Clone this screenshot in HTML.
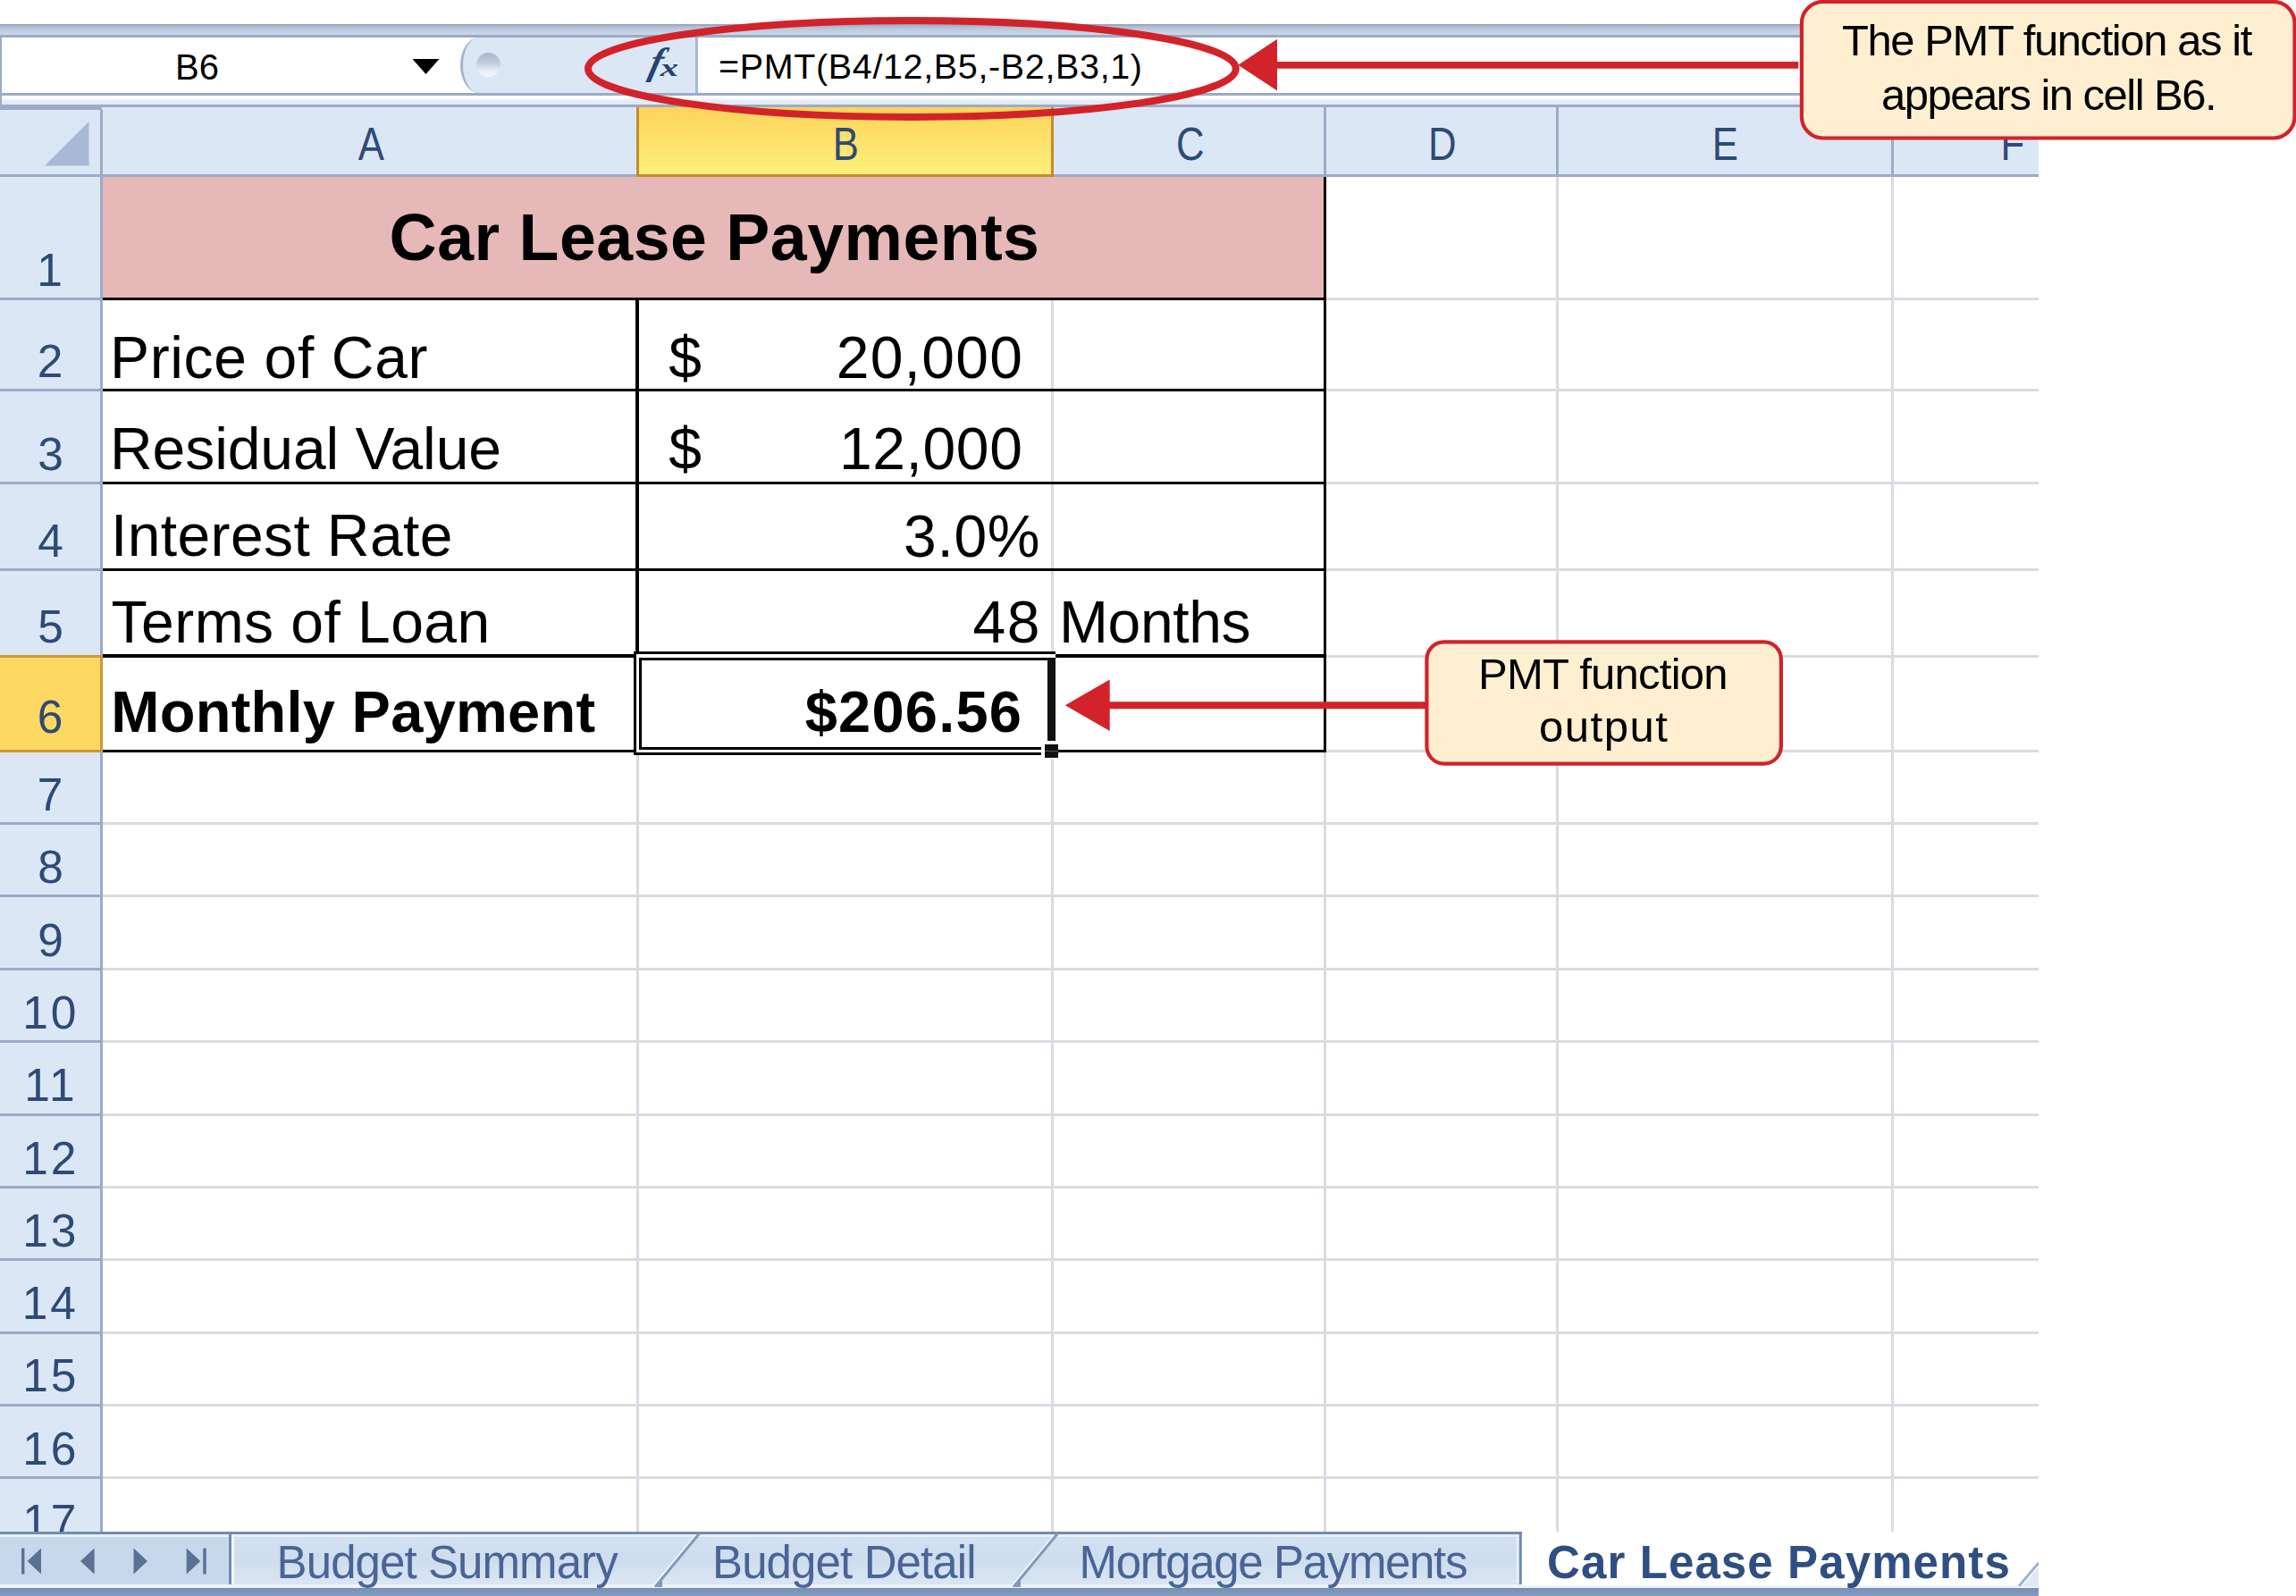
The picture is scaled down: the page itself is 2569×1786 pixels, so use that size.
<!DOCTYPE html>
<html><head><meta charset="utf-8"><title>Car Lease Payments</title>
<style>
html,body{margin:0;padding:0}
body{width:2569px;height:1786px;position:relative;overflow:hidden;background:#fff;font-family:"Liberation Sans",sans-serif}
.a{position:absolute}
.t{white-space:pre}
.ch{transform:scaleX(.84)}
#shot{left:0;top:0;width:2281px;height:1786px;overflow:hidden}
#grid{left:0;top:0;width:2281px;height:1714px;overflow:hidden}
</style></head><body>
<div id="shot" class="a">
<div class="a" style="left:0px;top:26.6px;width:2281px;height:12.6px;background:linear-gradient(#8c9dbd 0%,#aebbd0 22%,#bfccdd 55%,#cad8e8 100%);"></div>
<div class="a" style="left:0px;top:39px;width:2281px;height:3px;background:#9babc8;"></div>
<div class="a" style="left:0px;top:42px;width:2281px;height:62px;background:#fff;"></div>
<div class="a" style="left:514.5px;top:42px;width:264px;height:62px;box-sizing:border-box;background:#dbe7f5;border-left:3px solid #a5b4ce;border-radius:21px 0 0 21px/31px 0 0 31px"></div>
<div class="a" style="left:778px;top:42px;width:3px;height:62px;background:#a9b8d1;"></div>
<div class="a" style="left:781px;top:42px;width:1500px;height:62px;background:#fff;"></div>
<div class="a" style="left:0px;top:104px;width:2281px;height:3px;background:#9babc8;"></div>
<div class="a" style="left:0px;top:107px;width:2281px;height:10px;background:linear-gradient(#fff 0%,#fbfcfe 30%,#e3ebf6 60%,#e1eaf6 100%);"></div>
<div class="a" style="left:0px;top:116.5px;width:2281px;height:3.5px;background:#9babc8;"></div>
<div class="a" style="left:0px;top:39px;width:2px;height:160px;background:#9babc8;"></div>
<svg class="a" style="left:461px;top:66px" width="31" height="18" viewBox="0 0 31 18"><path d="M0.5 0 H30.5 L15.5 17 Z" fill="#000"/></svg>
<div class="a" style="left:533px;top:59px;width:27px;height:27px;border-radius:50%;background:linear-gradient(#aab6c9 0%,#c3cddc 45%,#e8eef6 75%,#f6f9fc 100%)"></div>
<div class="a" style="left:0px;top:120px;width:2281px;height:75.5px;background:#dbe7f5;"></div>
<div class="a" style="left:0px;top:116.5px;width:113.5px;height:6.5px;background:#9babc8;"></div>
<svg class="a" style="left:50px;top:136px" width="50" height="50" viewBox="0 0 50 50"><path d="M49.5 0 V49.5 H0 Z" fill="#a9b9d5"/></svg>
<div class="a" style="left:711.5px;top:120px;width:467px;height:78px;background:linear-gradient(#fdd35a 0%,#fde26c 50%,#fdf07c 100%);box-sizing:border-box;border:3px solid #c58b2d;border-top:none"></div>
<div class="a" style="left:112px;top:123px;width:3px;height:76px;background:#9babc8;"></div>
<div class="a" style="left:1481.1px;top:120px;width:3px;height:76px;background:#9babc8;"></div>
<div class="a" style="left:1740.8px;top:120px;width:3px;height:76px;background:#9babc8;"></div>
<div class="a" style="left:2115.5px;top:120px;width:3px;height:76px;background:#9babc8;"></div>
<div class="a" style="left:0px;top:195px;width:712px;height:3px;background:#9babc8;"></div>
<div class="a" style="left:1178.5px;top:195px;width:1102.5px;height:3px;background:#9babc8;"></div>
<div class="a" style="left:0px;top:198px;width:112px;height:1517px;background:#dbe7f5;"></div>
<div class="a" style="left:112px;top:198px;width:3px;height:1517px;background:#9babc8;"></div>
<div class="a" style="left:0px;top:332.8px;width:113px;height:3px;background:#9babc8;"></div>
<div class="a" style="left:0px;top:435.2px;width:113px;height:3px;background:#9babc8;"></div>
<div class="a" style="left:0px;top:538.8px;width:113px;height:3px;background:#9babc8;"></div>
<div class="a" style="left:0px;top:636px;width:113px;height:3px;background:#9babc8;"></div>
<div class="a" style="left:0px;top:732.5px;width:113px;height:3px;background:#9babc8;"></div>
<div class="a" style="left:0px;top:838.9px;width:113px;height:3px;background:#9babc8;"></div>
<div class="a" style="left:0px;top:920.2px;width:113px;height:3px;background:#9babc8;"></div>
<div class="a" style="left:0px;top:1001.4px;width:113px;height:3px;background:#9babc8;"></div>
<div class="a" style="left:0px;top:1082.9px;width:113px;height:3px;background:#9babc8;"></div>
<div class="a" style="left:0px;top:1164px;width:113px;height:3px;background:#9babc8;"></div>
<div class="a" style="left:0px;top:1245.5px;width:113px;height:3px;background:#9babc8;"></div>
<div class="a" style="left:0px;top:1326.8px;width:113px;height:3px;background:#9babc8;"></div>
<div class="a" style="left:0px;top:1407.9px;width:113px;height:3px;background:#9babc8;"></div>
<div class="a" style="left:0px;top:1489.5px;width:113px;height:3px;background:#9babc8;"></div>
<div class="a" style="left:0px;top:1570.7px;width:113px;height:3px;background:#9babc8;"></div>
<div class="a" style="left:0px;top:1651.8px;width:113px;height:3px;background:#9babc8;"></div>
<div class="a" style="left:0px;top:732.5px;width:115px;height:109.4px;background:#fdd963;box-sizing:border-box;border:3px solid #cd9838;border-left:none"></div>
<div class="a" style="left:711.5px;top:198px;width:3px;height:1517px;background:#dadbe0;"></div>
<div class="a" style="left:1175.5px;top:198px;width:3px;height:1517px;background:#dadbe0;"></div>
<div class="a" style="left:1481.1px;top:198px;width:3px;height:1517px;background:#dadbe0;"></div>
<div class="a" style="left:1740.8px;top:198px;width:3px;height:1517px;background:#dadbe0;"></div>
<div class="a" style="left:2115.5px;top:198px;width:3px;height:1517px;background:#dadbe0;"></div>
<div class="a" style="left:115px;top:332.8px;width:2166px;height:3px;background:#dadbe0;"></div>
<div class="a" style="left:115px;top:435.2px;width:2166px;height:3px;background:#dadbe0;"></div>
<div class="a" style="left:115px;top:538.8px;width:2166px;height:3px;background:#dadbe0;"></div>
<div class="a" style="left:115px;top:636px;width:2166px;height:3px;background:#dadbe0;"></div>
<div class="a" style="left:115px;top:732.5px;width:2166px;height:3px;background:#dadbe0;"></div>
<div class="a" style="left:115px;top:838.9px;width:2166px;height:3px;background:#dadbe0;"></div>
<div class="a" style="left:115px;top:920.2px;width:2166px;height:3px;background:#dadbe0;"></div>
<div class="a" style="left:115px;top:1001.4px;width:2166px;height:3px;background:#dadbe0;"></div>
<div class="a" style="left:115px;top:1082.9px;width:2166px;height:3px;background:#dadbe0;"></div>
<div class="a" style="left:115px;top:1164px;width:2166px;height:3px;background:#dadbe0;"></div>
<div class="a" style="left:115px;top:1245.5px;width:2166px;height:3px;background:#dadbe0;"></div>
<div class="a" style="left:115px;top:1326.8px;width:2166px;height:3px;background:#dadbe0;"></div>
<div class="a" style="left:115px;top:1407.9px;width:2166px;height:3px;background:#dadbe0;"></div>
<div class="a" style="left:115px;top:1489.5px;width:2166px;height:3px;background:#dadbe0;"></div>
<div class="a" style="left:115px;top:1570.7px;width:2166px;height:3px;background:#dadbe0;"></div>
<div class="a" style="left:115px;top:1651.8px;width:2166px;height:3px;background:#dadbe0;"></div>
<div class="a" style="left:115px;top:198px;width:1367.6px;height:136.3px;background:#e6b8b7;"></div>
<div class="a" style="left:115px;top:332.6px;width:1369.3px;height:3.4px;background:#000;"></div>
<div class="a" style="left:115px;top:435px;width:1369.3px;height:3.4px;background:#000;"></div>
<div class="a" style="left:115px;top:538.6px;width:1369.3px;height:3.4px;background:#000;"></div>
<div class="a" style="left:115px;top:635.8px;width:1369.3px;height:3.4px;background:#000;"></div>
<div class="a" style="left:115px;top:732.3px;width:1369.3px;height:3.4px;background:#000;"></div>
<div class="a" style="left:115px;top:838.7px;width:1369.3px;height:3.4px;background:#000;"></div>
<div class="a" style="left:711.3px;top:334.3px;width:3.4px;height:506.1px;background:#000;"></div>
<div class="a" style="left:1480.9px;top:198px;width:3.4px;height:644.1px;background:#000;"></div>
<div class="a" style="left:709.3px;top:729px;width:471.4px;height:116.2px;background:#fff;"></div>
<div class="a" style="left:709.3px;top:729px;width:471.4px;height:3.3px;background:#000;"></div>
<div class="a" style="left:709.3px;top:729px;width:3.1px;height:116.2px;background:#000;"></div>
<div class="a" style="left:709.3px;top:841.9px;width:455.7px;height:3.3px;background:#000;"></div>
<div class="a" style="left:715.4px;top:735.8px;width:460.6px;height:3.3px;background:#000;"></div>
<div class="a" style="left:715.4px;top:735.8px;width:3.1px;height:103.2px;background:#000;"></div>
<div class="a" style="left:715.4px;top:835.7px;width:449.6px;height:3.3px;background:#000;"></div>
<div class="a" style="left:1172.2px;top:735.8px;width:8.5px;height:93.2px;background:#111;"></div>
<div class="a" style="left:1165px;top:829px;width:19.4px;height:19.5px;background:#fff;"></div>
<div class="a" style="left:1168.6px;top:833px;width:15.8px;height:15px;background:#111;"></div>
<div class="a" style="left:1168.6px;top:839.6px;width:15.8px;height:1.6px;background:#555;"></div>
<div class="a" style="left:0px;top:1714px;width:2281px;height:63px;background:#c7d8ed;"></div>
<div class="a" style="left:0px;top:1714.3px;width:1703px;height:3.1px;background:#708cb2;"></div>
<div class="a" style="left:0px;top:1717.4px;width:1700px;height:3px;background:#eaf0f8;"></div>
<div class="a" style="left:0px;top:1772.8px;width:2281px;height:4.4px;background:#eef3fa;"></div>
<div class="a" style="left:0px;top:1777px;width:2281px;height:9px;background:linear-gradient(#7491b5,#859ebf);"></div>
<div class="a" style="left:255.8px;top:1717px;width:3px;height:56px;background:#708cb2;"></div>
<div class="a" style="left:258.8px;top:1717.4px;width:3.2px;height:55.4px;background:#f4f7fb;"></div>
<svg class="a" style="left:259px;top:1715px" width="1444" height="61" viewBox="259 1715 1444 61"><defs><linearGradient id="tg" x1="0" y1="0" x2="0" y2="1"><stop offset="0" stop-color="#d2e0f1"/><stop offset="0.5" stop-color="#cedded"/><stop offset="1" stop-color="#dbe6f3"/></linearGradient></defs><path d="M262 1720.4 H1700 V1772.8 H262 Z" fill="url(#tg)"/><path d="M779 1718 L730.5 1776" stroke="#f3f6fb" stroke-width="3" fill="none"/><path d="M782.5 1716 L733 1776" stroke="#8199bb" stroke-width="3" fill="none"/><path d="M733 1776 L741 1764 V1776 Z" fill="#8199bb"/><path d="M1180 1718 L1131.5 1776" stroke="#f3f6fb" stroke-width="3" fill="none"/><path d="M1183.5 1716 L1134 1776" stroke="#8199bb" stroke-width="3" fill="none"/><path d="M1134 1776 L1142 1764 V1776 Z" fill="#8199bb"/><path d="M1701.2 1715 V1773" stroke="#708cb2" stroke-width="3" fill="none"/><path d="M1698.2 1718 V1772" stroke="#eaf0f8" stroke-width="2.4" fill="none"/></svg>
<div class="a" style="left:1702.7px;top:1713.8px;width:578.3px;height:60px;background:#fff;"></div>
<svg class="a" style="left:2251px;top:1745px" width="30" height="30" viewBox="0 0 30 30"><path d="M30 4 L8 30" stroke="#9fb2cf" stroke-width="3" fill="none"/><path d="M30 8 V30 H12 Z" fill="#dfe8f4"/></svg>
<svg class="a" style="left:20px;top:1730px" width="220" height="34" viewBox="20 1730 220 34" fill="#5a7193"><rect x="24" y="1732.5" width="3.4" height="29"/><path d="M46 1732.5 V1761.5 L30.6 1747 Z"/><path d="M105.6 1732.5 V1761.5 L90 1747 Z"/><path d="M149.5 1732.5 V1761.5 L165 1747 Z"/><path d="M208.7 1732.5 V1761.5 L224.3 1747 Z"/><rect x="227.3" y="1732.5" width="3.4" height="29"/></svg>
<div id="grid" class="a">
<span class="a t rn" style="left:41.2px;top:276.5px;font:400 51.5px/51.5px 'Liberation Sans',sans-serif;color:#2f4a75;">1</span>
<span class="a t rn" style="left:41.7px;top:378.9px;font:400 51.5px/51.5px 'Liberation Sans',sans-serif;color:#2f4a75;">2</span>
<span class="a t rn" style="left:42.2px;top:482.5px;font:400 51.5px/51.5px 'Liberation Sans',sans-serif;color:#2f4a75;">3</span>
<span class="a t rn" style="left:42.2px;top:579.7px;font:400 51.5px/51.5px 'Liberation Sans',sans-serif;color:#2f4a75;">4</span>
<span class="a t rn" style="left:42.2px;top:676.2px;font:400 51.5px/51.5px 'Liberation Sans',sans-serif;color:#2f4a75;">5</span>
<span class="a t rn" style="left:41.7px;top:776.5px;font:400 51.5px/51.5px 'Liberation Sans',sans-serif;color:#2f4a75;">6</span>
<span class="a t rn" style="left:41.7px;top:863.9px;font:400 51.5px/51.5px 'Liberation Sans',sans-serif;color:#2f4a75;">7</span>
<span class="a t rn" style="left:42.2px;top:945.1px;font:400 51.5px/51.5px 'Liberation Sans',sans-serif;color:#2f4a75;">8</span>
<span class="a t rn" style="left:42.2px;top:1026.6px;font:400 51.5px/51.5px 'Liberation Sans',sans-serif;color:#2f4a75;">9</span>
<span class="a t rn" style="left:25.2px;top:1107.7px;font:400 51.5px/51.5px 'Liberation Sans',sans-serif;color:#2f4a75;letter-spacing:3.00px;">10</span>
<span class="a t rn" style="left:27.2px;top:1189.2px;font:400 51.5px/51.5px 'Liberation Sans',sans-serif;color:#2f4a75;letter-spacing:3.00px;">11</span>
<span class="a t rn" style="left:25.2px;top:1270.5px;font:400 51.5px/51.5px 'Liberation Sans',sans-serif;color:#2f4a75;letter-spacing:3.00px;">12</span>
<span class="a t rn" style="left:25.2px;top:1351.6px;font:400 51.5px/51.5px 'Liberation Sans',sans-serif;color:#2f4a75;letter-spacing:3.00px;">13</span>
<span class="a t rn" style="left:24.7px;top:1433.2px;font:400 51.5px/51.5px 'Liberation Sans',sans-serif;color:#2f4a75;letter-spacing:3.00px;">14</span>
<span class="a t rn" style="left:25.2px;top:1514.4px;font:400 51.5px/51.5px 'Liberation Sans',sans-serif;color:#2f4a75;letter-spacing:3.00px;">15</span>
<span class="a t rn" style="left:25.2px;top:1595.5px;font:400 51.5px/51.5px 'Liberation Sans',sans-serif;color:#2f4a75;letter-spacing:3.00px;">16</span>
<span class="a t rn" style="left:25.2px;top:1676.8px;font:400 51.5px/51.5px 'Liberation Sans',sans-serif;color:#2f4a75;letter-spacing:3.00px;">17</span>
</div>
<span class="a t " style="left:196.0px;top:54.5px;font:400 40px/40px 'Liberation Sans',sans-serif;color:#000;">B6</span>
<span class="a t " style="left:804.0px;top:55.4px;font:400 39.5px/39.5px 'Liberation Sans',sans-serif;color:#000;letter-spacing:0.64px;">=PMT(B4/12,B5,-B2,B3,1)</span>
<span class="a t ch" style="left:397.5px;top:135.3px;font:400 52px/52px 'Liberation Sans',sans-serif;color:#2f4a75;">A</span>
<span class="a t ch" style="left:929.0px;top:135.3px;font:400 52px/52px 'Liberation Sans',sans-serif;color:#2f4a75;">B</span>
<span class="a t ch" style="left:1313.0px;top:135.3px;font:400 52px/52px 'Liberation Sans',sans-serif;color:#2f4a75;">C</span>
<span class="a t ch" style="left:1594.5px;top:135.3px;font:400 52px/52px 'Liberation Sans',sans-serif;color:#2f4a75;">D</span>
<span class="a t ch" style="left:1913.0px;top:135.3px;font:400 52px/52px 'Liberation Sans',sans-serif;color:#2f4a75;">E</span>
<span class="a t ch" style="left:2235.5px;top:135.3px;font:400 52px/52px 'Liberation Sans',sans-serif;color:#2f4a75;">F</span>
<span class="a t " style="left:435.6px;top:228.5px;font:700 73.5px/73.5px 'Liberation Sans',sans-serif;color:#000;letter-spacing:0.49px;">Car Lease Payments</span>
<span class="a t " style="left:123.0px;top:366.8px;font:400 66px/66px 'Liberation Sans',sans-serif;color:#000;letter-spacing:0.64px;">Price of Car</span>
<span class="a t " style="left:123.0px;top:468.8px;font:400 66px/66px 'Liberation Sans',sans-serif;color:#000;letter-spacing:-0.08px;">Residual Value</span>
<span class="a t " style="left:124.0px;top:565.5px;font:400 66px/66px 'Liberation Sans',sans-serif;color:#000;letter-spacing:0.38px;">Interest Rate</span>
<span class="a t " style="left:124.6px;top:662.8px;font:400 66px/66px 'Liberation Sans',sans-serif;color:#000;letter-spacing:0.45px;">Terms of Loan</span>
<span class="a t " style="left:124.3px;top:764.3px;font:700 65px/65px 'Liberation Sans',sans-serif;color:#000;letter-spacing:0.26px;">Monthly Payment</span>
<span class="a t " style="left:748.3px;top:366.5px;font:400 66px/66px 'Liberation Sans',sans-serif;color:#000;">$</span>
<span class="a t " style="left:935.7px;top:366.5px;font:400 66px/66px 'Liberation Sans',sans-serif;color:#000;letter-spacing:1.26px;">20,000</span>
<span class="a t " style="left:748.3px;top:469.2px;font:400 66px/66px 'Liberation Sans',sans-serif;color:#000;">$</span>
<span class="a t " style="left:939.0px;top:469.2px;font:400 66px/66px 'Liberation Sans',sans-serif;color:#000;letter-spacing:0.60px;">12,000</span>
<span class="a t " style="left:1011.0px;top:566.5px;font:400 66px/66px 'Liberation Sans',sans-serif;color:#000;letter-spacing:0.67px;">3.0%</span>
<span class="a t " style="left:1088.4px;top:663.3px;font:400 66px/66px 'Liberation Sans',sans-serif;color:#000;letter-spacing:1.60px;">48</span>
<span class="a t " style="left:1185.0px;top:663.3px;font:400 66px/66px 'Liberation Sans',sans-serif;color:#000;letter-spacing:-0.40px;">Months</span>
<span class="a t " style="left:900.7px;top:764.3px;font:700 65px/65px 'Liberation Sans',sans-serif;color:#000;letter-spacing:1.22px;">$206.56</span>
<span class="a t " style="left:309.6px;top:1723.0px;font:400 51px/51px 'Liberation Sans',sans-serif;color:#4a6496;letter-spacing:-0.92px;">Budget Summary</span>
<span class="a t " style="left:797.0px;top:1723.0px;font:400 51px/51px 'Liberation Sans',sans-serif;color:#4a6496;letter-spacing:-0.88px;">Budget Detail</span>
<span class="a t " style="left:1207.5px;top:1723.0px;font:400 51px/51px 'Liberation Sans',sans-serif;color:#4a6496;letter-spacing:-1.34px;">Mortgage Payments</span>
<span class="a t " style="left:1731.0px;top:1723.0px;font:700 51px/51px 'Liberation Sans',sans-serif;color:#2f4f82;letter-spacing:1.11px;">Car Lease Payments</span>
<span class="a t " style="left:726.7px;top:47.8px;font:italic 700 42.5px/42.5px 'Liberation Serif',serif;color:#27446f;transform:skewX(-14deg);transform-origin:9.0px 25.0px;">f</span>
<span class="a t " style="left:741.8px;top:63.4px;font:italic 700 27px/27px 'Liberation Serif',serif;color:#27446f;transform:scaleX(1.5);transform-origin:6.5px 15.5px;">x</span>
</div>

<svg class="a" style="left:0;top:0" width="2569" height="1786" viewBox="0 0 2569 1786">
<ellipse cx="1020.4" cy="76.9" rx="362.4" ry="54" fill="none" stroke="#d2232a" stroke-width="8"/>
<path d="M1385.3 72.8 L1429 43.8 V69 H2012.2 V76.8 H1429 V101.6 Z" fill="#d2232a"/>
<path d="M1191.8 789.3 L1241.7 760.4 V785.3 H1595 V793.3 H1241.7 V818 Z" fill="#d2232a"/>
<rect x="2015.9" y="1.9" width="551.6" height="152.6" rx="24" ry="24" fill="#feefd1" stroke="#d2232a" stroke-width="4.2"/>
<rect x="1596.4" y="718.3" width="396.5" height="136.3" rx="19.5" ry="19.5" fill="#feefd1" stroke="#d2232a" stroke-width="4.2"/>
</svg>
<span class="a t " style="left:2061.0px;top:21.3px;font:400 49px/49px 'Liberation Sans',sans-serif;color:#000;letter-spacing:-1.43px;">The PMT function as it</span>
<span class="a t " style="left:2105.0px;top:81.6px;font:400 49px/49px 'Liberation Sans',sans-serif;color:#000;letter-spacing:-1.53px;">appears in cell B6.</span>
<span class="a t " style="left:1654.0px;top:730.2px;font:400 49px/49px 'Liberation Sans',sans-serif;color:#000;letter-spacing:-0.75px;">PMT function</span>
<span class="a t " style="left:1722.0px;top:789.0px;font:400 49px/49px 'Liberation Sans',sans-serif;color:#000;letter-spacing:1.52px;">output</span>
</body></html>
